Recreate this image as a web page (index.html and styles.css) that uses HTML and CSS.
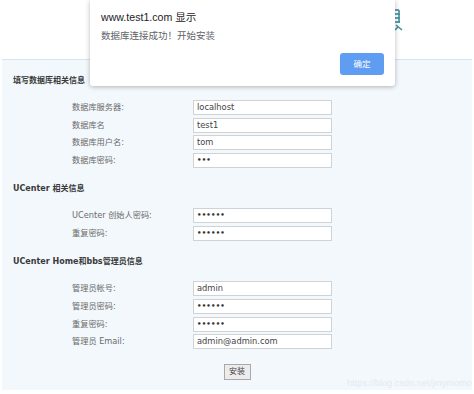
FILE: index.html
```html
<!DOCTYPE html>
<html lang="zh-CN">
<head>
<meta charset="utf-8">
<title>安装</title>
<link rel="stylesheet" href="styles.css">
</head>
<body>
<div class="page">
  <div class="header">
    <svg class="logo" width="9" height="24" viewBox="0 0 9 24">
      <g fill="none" stroke="#3f8f9c" stroke-width="1.6">
        <path d="M0 3 H5"/>
        <path d="M0 7 H6"/>
        <path d="M0 11 H6"/>
        <path d="M0 15 H6"/>
        <path d="M5 3 V16"/>
        <path d="M2 18 L8 23"/>
        <path d="M4 20 L1 23"/>
      </g>
    </svg>
  </div>
  <div class="panel">
    <div class="section">
      <div class="sec-title">填写数据库相关信息</div>
      <div class="rows">
        <label class="lbl">数据库服务器:</label><div class="inp">localhost</div>
        <label class="lbl">数据库名</label><div class="inp">test1</div>
        <label class="lbl">数据库用户名:</label><div class="inp">tom</div>
        <label class="lbl">数据库密码:</label><div class="inp pw">•••</div>
      </div>
    </div>
    <div class="section">
      <div class="sec-title">UCenter 相关信息</div>
      <div class="rows">
        <label class="lbl">UCenter 创始人密码:</label><div class="inp pw">••••••</div>
        <label class="lbl">重复密码:</label><div class="inp pw">••••••</div>
      </div>
    </div>
    <div class="section">
      <div class="sec-title">UCenter Home和bbs管理员信息</div>
      <div class="rows">
        <label class="lbl">管理员帐号:</label><div class="inp">admin</div>
        <label class="lbl">管理员密码:</label><div class="inp pw">••••••</div>
        <label class="lbl">重复密码:</label><div class="inp pw">••••••</div>
        <label class="lbl">管理员 Email:</label><div class="inp">admin@admin.com</div>
      </div>
    </div>
    <div class="actions"><span class="btn">安装</span></div>
  </div>
  <div class="watermark">https://blog.csdn.net/jmymomo</div>
  <div class="dialog">
    <div class="d-title">www.test1.com 显示</div>
    <div class="d-msg">数据库连接成功！开始安装</div>
    <div class="d-foot"><span class="d-btn">确定</span></div>
  </div>
</div>
</body>
</html>
```
FILE: styles.css
```css
html, body {
  margin: 0;
  padding: 0;
  background: #ffffff;
}
.page {
  position: relative;
  width: 474px;
  height: 394px;
  overflow: hidden;
  font-family: "DejaVu Sans", "Noto Sans CJK SC", sans-serif;
}
.header {
  height: 59px;
  box-sizing: border-box;
  padding: 7px 0 0 394px;
  display: flex;
  align-items: flex-start;
}
.panel {
  margin: 0 2px;
  border-top: 1px solid #d9e5ee;
  background: #f3f8fc;
  box-sizing: border-box;
  height: 331px;
  padding-top: 14px;
}
.section {
  margin-bottom: 14.5px;
}
.sec-title {
  padding-left: 11px;
  height: 14px;
  line-height: 14px;
  font-size: 8px;
  font-weight: bold;
  color: #3a3a3a;
  margin-bottom: 12px;
}
.rows {
  display: grid;
  grid-template-columns: 121px 139px;
  grid-auto-rows: 15px;
  row-gap: 2.6px;
  padding-left: 70px;
}
.lbl {
  font-size: 8.2px;
  line-height: 15px;
  color: #6a6a6a;
}
.inp {
  box-sizing: border-box;
  height: 15px;
  border: 1px solid #cfd3d6;
  background: #fff;
  font-size: 8.3px;
  line-height: 13px;
  padding-left: 3px;
  color: #444;
}
.inp.pw {
  font-size: 7px;
  font-weight: bold;
  letter-spacing: 0.2px;
  color: #333;
}
.actions {
  display: flex;
  justify-content: center;
}
.btn {
  box-sizing: border-box;
  width: 27px;
  height: 16px;
  border: 1px solid #a9a9a9;
  background: #ececec;
  font-size: 8px;
  line-height: 14px;
  text-align: center;
  color: #444;
}
.watermark {
  position: absolute;
  left: 347px;
  top: 378px;
  font-family: "Liberation Sans", sans-serif;
  font-size: 9px;
  color: #e4e9ef;
  letter-spacing: 0.1px;
}
.dialog {
  position: absolute;
  left: 90px;
  top: 0;
  width: 305px;
  height: 86px;
  box-sizing: border-box;
  background: #fff;
  border-radius: 0 0 3px 3px;
  box-shadow: 0 1px 5px rgba(0, 0, 0, 0.28);
  padding: 10px 11px 11px 11px;
  display: flex;
  flex-direction: column;
  font-family: "Liberation Sans", "Noto Sans CJK SC", sans-serif;
}
.d-title {
  font-size: 10.6px;
  line-height: 14px;
  color: #222;
}
.d-msg {
  margin-top: 6px;
  font-size: 9.5px;
  line-height: 12px;
  color: #5f6368;
}
.d-foot {
  margin-top: auto;
  display: flex;
  justify-content: flex-end;
}
.d-btn {
  width: 44px;
  height: 22px;
  border-radius: 3px;
  background: #5f9df2;
  color: #fff;
  font-size: 8.5px;
  line-height: 22px;
  text-align: center;
}
```
